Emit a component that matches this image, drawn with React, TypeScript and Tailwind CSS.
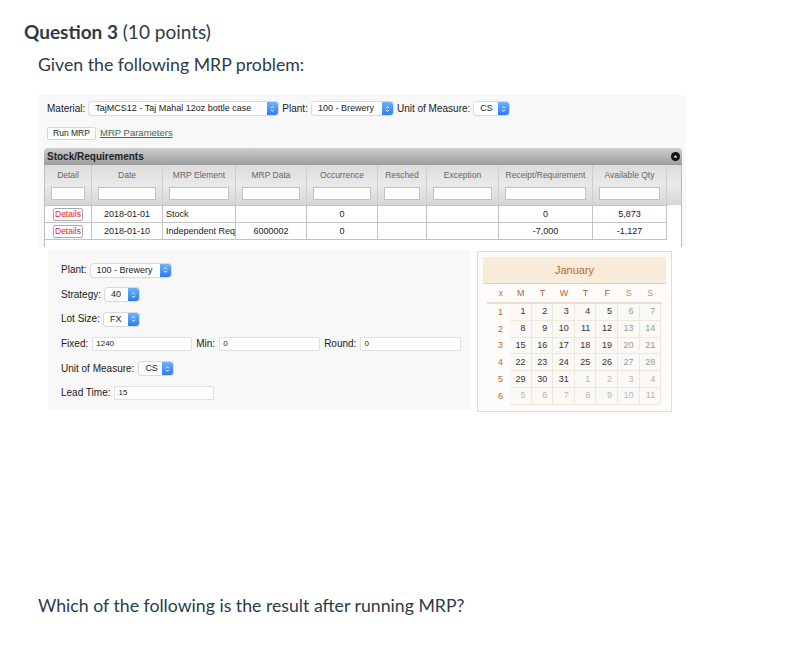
import React from 'react';

const cols = ['Detail', 'Date', 'MRP Element', 'MRP Data', 'Occurrence', 'Resched', 'Exception', 'Receipt/Requirement', 'Available Qty'];

const rows = [
  ['2018-01-01', 'Stock', '', '0', '', '', '0', '5,873'],
  ['2018-01-10', 'Independent Req', '6000002', '0', '', '', '-7,000', '-1,127'],
];

const weeks = [
  [1, 2, 3, 4, 5, 6, 7],
  [8, 9, 10, 11, 12, 13, 14],
  [15, 16, 17, 18, 19, 20, 21],
  [22, 23, 24, 25, 26, 27, 28],
  [29, 30, 31, 1, 2, 3, 4],
  [5, 6, 7, 8, 9, 10, 11],
];

function Spin() {
  return (
    <svg width="5" height="8" viewBox="0 0 5 8">
      <path d="M1 3.2 L2.5 1.6 L4 3.2 M1 4.8 L2.5 6.4 L4 4.8" stroke="white" strokeWidth="0.9" fill="none" />
    </svg>
  );
}

function Select({ value, className }: { value: string; className: string }) {
  return (
    <div className={`flex h-[13px] rounded-[3px] bg-white shadow-[0_0_0_1px_#dadada,0_1px_1px_rgba(0,0,0,0.08)] ${className}`}>
      <div className="flex-1 flex items-center pl-[6px] text-[9px] leading-none text-[#222] whitespace-nowrap overflow-hidden">{value}</div>
      <div className="w-[11px] h-full rounded-r-[3px] bg-gradient-to-b from-[#6db2fb] to-[#2c7cef] flex items-center justify-center">
        <Spin />
      </div>
    </div>
  );
}

function Field({ value, className }: { value: string; className: string }) {
  return (
    <div className={`h-[14px] bg-white border border-[#e0e0e0] flex items-center pl-[3px] text-[8px] leading-none text-[#222] ${className}`}>
      {value}
    </div>
  );
}

function StockTable() {
  return (
    <div className="mt-[9px] ml-[6px] w-[638px]">
      <div className="h-[17px] rounded-t-[4px] bg-gradient-to-b from-[#cdcdcd] to-[#9d9d9d] flex items-center justify-between pl-[3px] pr-[2px]">
        <span className="text-[10px] font-bold text-[#1e1e1e] leading-none">Stock/Requirements</span>
        <svg width="9" height="9" viewBox="0 0 9 9">
          <circle cx="4.5" cy="4.5" r="4.5" fill="#111" />
          <path d="M2.4 5.6 L4.5 3.2 L6.6 5.6 Z" fill="white" />
        </svg>
      </div>
      <div className="h-[82px] bg-white border-x border-[#bdbdbd]">
        <div className="grid grid-cols-[47px_71px_73px_71px_71px_49px_72px_94px_74px_14px] h-[40px] bg-gradient-to-b from-[#dcdcdc] via-[#e9e9e9] to-[#d6d6d6]">
          {cols.map((c) => (
            <div key={c} className="border-r border-[#cdcdcd] flex flex-col">
              <div className="h-[21px] flex items-center justify-center text-[8.5px] text-[#666] leading-none whitespace-nowrap">{c}</div>
              <div className="mt-[1px] mx-[6px] h-[13px] bg-white border border-[#c2c2c2]" />
            </div>
          ))}
          <div />
        </div>
        <div className="w-[623px] border-t border-[#c4c4c4]">
          {rows.map((r, i) => (
            <div key={i} className="grid grid-cols-[47px_71px_73px_71px_71px_49px_72px_94px_74px] h-[17px]">
              <div className="border-r border-b border-[#c4c4c4] flex items-center justify-center">
                <div className="h-[13px] w-[30px] bg-white border border-[#aaa] rounded-[2px] flex items-center justify-center text-[8.5px] leading-none text-[#e8211b]">
                  Details
                </div>
              </div>
              {r.map((v, j) => (
                <div
                  key={j}
                  className={`border-r border-b border-[#c4c4c4] flex items-center text-[9px] leading-none text-[#222] whitespace-nowrap ${j === 1 ? 'justify-start pl-[3px]' : 'justify-center'}`}
                >
                  {v}
                </div>
              ))}
            </div>
          ))}
        </div>
      </div>
    </div>
  );
}

function Calendar() {
  return (
    <div className="ml-[7px] mt-[1px] w-[195px] h-[161px] border border-[#e4dbcf] bg-[#fdfcfa] p-[5px]">
      <div className="h-[27px] bg-[#f8ebda] border-b border-[#e6d1b5] flex items-center justify-center text-[11px] text-[#c0652e]">
        January
      </div>
      <div className="mx-[4px]">
        <div className="grid grid-cols-[23px_repeat(7,21.6px)] h-[20px] border-b-2 border-[#eadfcf] text-[9px] leading-none">
          <div className="flex items-center justify-end pr-[7px] text-[#c8703a]">x</div>
          {['M', 'T', 'W', 'T', 'F', 'S', 'S'].map((d, i) => (
            <div key={i} className={`flex items-center justify-center ${i > 4 ? 'text-[#d98a5e]' : 'text-[#b85c2a]'}`}>
              {d}
            </div>
          ))}
        </div>
        {weeks.map((w, wi) => (
          <div key={wi} className="grid grid-cols-[23px_repeat(7,21.6px)] h-[16.8px] text-[9px] leading-none">
            <div className="flex items-center justify-end pr-[7px] text-[#c8642a]">{wi + 1}</div>
            {w.map((d, di) => {
              const other = (wi === 4 && di > 2) || wi === 5;
              const color = other ? 'text-[#b5b5b5]' : di > 4 ? 'text-[#999]' : 'text-[#333]';
              return (
                <div key={di} className={`flex items-center justify-end pr-[5px] bg-[#fbf9f5] border-r border-b border-[#f0e7dc] ${color}`}>
                  {d}
                </div>
              );
            })}
          </div>
        ))}
      </div>
    </div>
  );
}

export default function App() {
  return (
    <div className="w-[801px] h-[669px] bg-white font-['Lato',sans-serif] text-[#2d3b45] overflow-hidden">
      <h2 className="pl-[24px] pt-[21px] text-[19px] leading-[22px]">
        <span className="font-bold">Question 3</span> (10 points)
      </h2>
      <p className="pl-[38px] mt-[10px] text-[17.7px] leading-[24px]">Given the following MRP problem:</p>

      <div className="ml-[38px] mt-[18px] w-[648px] font-['Liberation_Sans',Arial,sans-serif] text-[#222]">
        <div className="h-[152px] bg-[#f8f8f8] pt-[7px] overflow-hidden">
          <div className="pl-[9px] h-[13px] flex items-center gap-[4px] text-[10px] leading-none">
            <span>Material:</span>
            <Select value="TajMCS12 - Taj Mahal 12oz bottle case" className="w-[189px]" />
            <span>Plant:</span>
            <Select value="100 - Brewery" className="w-[81px]" />
            <span>Unit of Measure:</span>
            <Select value="CS" className="w-[35px]" />
          </div>
          <div className="pl-[9px] mt-[12px] h-[12px] flex items-center gap-[4px]">
            <div className="h-[13px] w-[49px] bg-white border border-[#d4d4d4] rounded-[2px] flex items-center justify-center text-[8.5px] leading-none">
              Run MRP
            </div>
            <span className="text-[9.5px] leading-none text-[#3f6b52] underline">MRP Parameters</span>
          </div>
          <StockTable />
        </div>

        <div className="flex mt-[3px]">
          <div className="ml-[10px] w-[422px] h-[160px] bg-[#f8f8f8] pl-[13px] pt-[8px] text-[10px] leading-none">
            <div className="h-[24.6px] flex items-center gap-[4px]">
              <span>Plant:</span>
              <Select value="100 - Brewery" className="w-[80px]" />
            </div>
            <div className="h-[24.6px] flex items-center gap-[4px]">
              <span>Strategy:</span>
              <Select value="40" className="w-[34px]" />
            </div>
            <div className="h-[24.6px] flex items-center gap-[4px]">
              <span>Lot Size:</span>
              <Select value="FX" className="w-[35px]" />
            </div>
            <div className="h-[24.6px] flex items-center gap-[4px]">
              <span>Fixed:</span>
              <Field value="1240" className="w-[100px]" />
              <span>Min:</span>
              <Field value="0" className="w-[101px]" />
              <span>Round:</span>
              <Field value="0" className="w-[101px]" />
            </div>
            <div className="h-[24.6px] flex items-center gap-[5px]">
              <span>Unit of Measure:</span>
              <Select value="CS" className="w-[34px]" />
            </div>
            <div className="h-[24.6px] flex items-center gap-[4px]">
              <span>Lead Time:</span>
              <Field value="15" className="w-[100px]" />
            </div>
          </div>
          <Calendar />
        </div>
      </div>

      <p className="pl-[38px] mt-[182px] text-[17.7px] leading-[24px]">Which of the following is the result after running MRP?</p>
    </div>
  );
}
